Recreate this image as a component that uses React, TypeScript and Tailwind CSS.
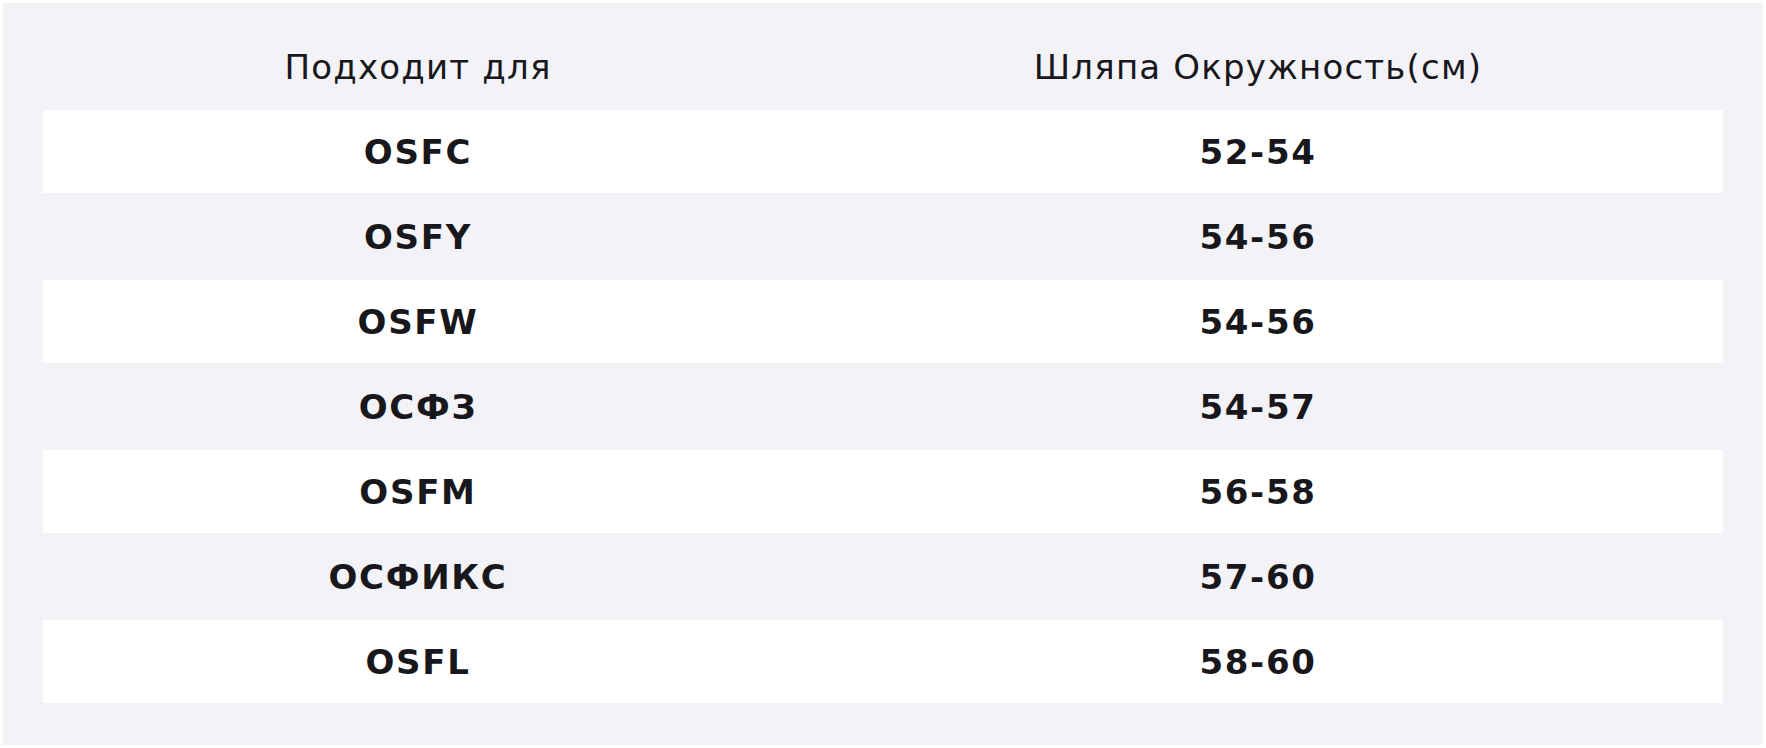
import React from "react";

const rows: [string, string][] = [
  ["OSFC", "52-54"],
  ["OSFY", "54-56"],
  ["OSFW", "54-56"],
  ["ОСФЗ", "54-57"],
  ["OSFM", "56-58"],
  ["ОСФИКС", "57-60"],
  ["OSFL", "58-60"],
];

export default function App() {
  return (
    <div className="w-full h-[748px] bg-white p-[3px] font-['DejaVu_Sans',sans-serif] text-[#17171c]">
      <div className="h-[742px] bg-[#f3f3f7] px-[40px]">
        <div className="grid grid-cols-[750px_1fr] h-[107px] pt-[44px] text-[34px] leading-[40px] tracking-[1.2px]">
          <div className="text-center">Подходит для</div>
          <div className="text-center">Шляпа Окружность(см)</div>
        </div>
        {rows.map(([a, b], i) => (
          <div
            key={i}
            className={
              i % 2 === 0
                ? "grid grid-cols-[750px_1fr] items-center h-[83px] pt-[2px] bg-white text-[34px] font-bold tracking-[1.7px]"
                : "grid grid-cols-[750px_1fr] items-center h-[87px] pt-[1px] text-[34px] font-bold tracking-[1.7px]"
            }
          >
            <div className="text-center">{a}</div>
            <div className="text-center">{b}</div>
          </div>
        ))}
      </div>
    </div>
  );
}
